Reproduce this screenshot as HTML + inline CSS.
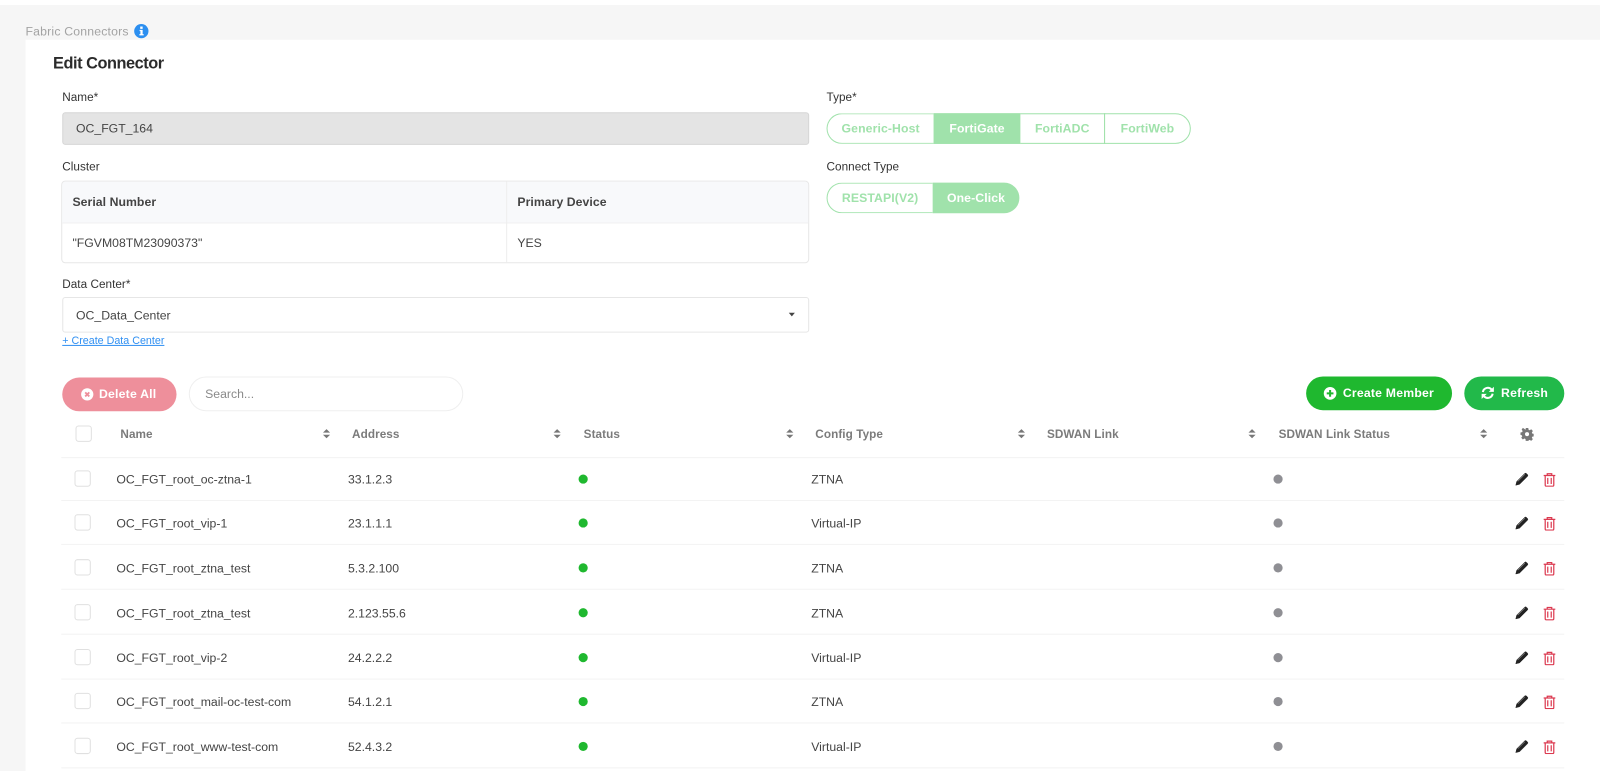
<!DOCTYPE html>
<html lang="en">
<head>
<meta charset="utf-8">
<title>Edit Connector</title>
<style>
html,body{margin:0;padding:0;width:1600px;height:771px;overflow:hidden;background:#fff;font-family:"Liberation Sans",sans-serif;color:#333}
#wrap{position:absolute;left:0;top:0;width:1568px;height:756px;transform:scale(1.020408);transform-origin:0 0;overflow:hidden}
#bg{position:absolute;left:0;top:5px;width:1568px;height:751px;background:#f6f6f6}
#card{position:absolute;left:25px;top:39px;width:1543px;height:717px;background:#fff}
.t{position:absolute;white-space:nowrap;line-height:16px;font-size:11.5px;letter-spacing:-.1px}
.b{position:absolute;box-sizing:border-box}
.lab{color:#333;font-size:11.5px;letter-spacing:.03px}
.th{color:#7b7b7b;font-weight:bold;font-size:11.5px;letter-spacing:.07px}
.cell{color:#444;font-size:12px;letter-spacing:0}
.chk{position:absolute;width:15.5px;height:15.5px;box-sizing:border-box;border:1px solid #e0e0e0;border-radius:3px;background:#fff}
.sep{position:absolute;left:60px;width:1473px;height:1px;background:#f3f3f3}
.dot{position:absolute;width:9px;height:9px;border-radius:50%}
.g{background:#1fb82f}.n{background:#8f8f94}
.seg{position:absolute;box-sizing:border-box;height:30px;line-height:28px;text-align:center;color:#a0e2ab;font-weight:bold;font-size:12px;letter-spacing:.1px;border:1px solid #a0e2ab;background:#fff}
.on{background:#a0e2ab;color:#fff}
.btn{position:absolute;box-sizing:border-box;height:33px;border-radius:17px;color:#fff;font-weight:bold;font-size:12px;line-height:33px;letter-spacing:.2px}
svg{position:absolute;display:block}
</style>
</head>
<body>
<div id="wrap">
<div id="bg"></div>
<div id="card"></div>

<div class="t" style="left:25px;top:23px;color:#a3a3a3;font-size:12px;letter-spacing:.18px">Fabric Connectors</div>
<svg style="left:130.500px;top:22.500px" width="15" height="15" viewBox="0 0 15 15"><circle cx="7.5" cy="7.5" r="7" fill="#2c8ff0"/><rect x="6.4" y="3" width="2.4" height="2.3" fill="#fff"/><path d="M5.8 6.3h3v4.2h1v1.2H5.6v-1.2h1V7.5h-.8z" fill="#fff"/></svg>

<div class="t" style="left:52px;top:55px;font-size:16px;font-weight:bold;color:#2b2b2b;letter-spacing:-.45px">Edit Connector</div>

<div class="t lab" style="left:61px;top:88px">Name*</div>
<div class="b" style="left:61px;top:110px;width:732px;height:32px;background:#e4e4e4;border:1px solid #d6d6d6;border-radius:3px"></div>
<div class="t cell" style="left:74.500px;top:118px">OC_FGT_164</div>

<div class="t lab" style="left:61px;top:156px">Cluster</div>
<div class="b" style="left:60px;top:177px;width:733px;height:81px;border:1px solid #e7e7e7;border-radius:4px;background:#fff"></div>
<div class="b" style="left:61px;top:178px;width:731px;height:41px;background:#f8f9fb;border-bottom:1.500px solid #f0f0f0;border-radius:3px 3px 0 0"></div>
<div class="b" style="left:496px;top:178px;width:1px;height:79px;background:#eeeeee"></div>
<div class="t" style="left:71px;top:190px;font-weight:bold;font-size:12px;color:#444;letter-spacing:.05px">Serial Number</div>
<div class="t" style="left:507px;top:190px;font-weight:bold;font-size:12px;color:#444;letter-spacing:.05px">Primary Device</div>
<div class="t cell" style="left:71px;top:230px">"FGVM08TM23090373"</div>
<div class="t cell" style="left:507px;top:230px">YES</div>

<div class="t lab" style="left:61px;top:271px">Data Center*</div>
<div class="b" style="left:61px;top:291px;width:732px;height:35px;border:1px solid #e6e6e6;border-radius:3px;background:#fff"></div>
<div class="t cell" style="left:74.500px;top:301px">OC_Data_Center</div>
<svg style="left:772px;top:305.500px" width="8" height="5" viewBox="0 0 8 5"><path d="M1 .5h6L4 4z" fill="#444"/></svg>
<div class="t" style="left:61px;top:326px;font-size:10.5px;color:#2f8ff2;text-decoration:underline;letter-spacing:0">+ Create Data Center</div>

<div class="t lab" style="left:810px;top:88px">Type*</div>
<div class="seg" style="left:810px;top:111px;width:105px;border-radius:15px 0 0 15px;border-right:0">Generic-Host</div>
<div class="seg on" style="left:915px;top:111px;width:85px">FortiGate</div>
<div class="seg" style="left:1000px;top:111px;width:83px;border-left:0">FortiADC</div>
<div class="seg" style="left:1082px;top:111px;width:85px;border-radius:0 15px 15px 0">FortiWeb</div>

<div class="t lab" style="left:810px;top:156px">Connect Type</div>
<div class="seg" style="left:810px;top:179px;width:104px;border-radius:15px 0 0 15px;border-right:0">RESTAPI(V2)</div>
<div class="seg on" style="left:914px;top:179px;width:85px;border-radius:0 15px 15px 0">One-Click</div>

<div class="btn" style="left:61px;top:370px;width:112px;background:#ee8f9b;padding-left:36px">Delete All</div>
<svg style="left:78.500px;top:379.500px" width="13" height="13" viewBox="0 0 13 13"><circle cx="6.5" cy="6.5" r="6" fill="#fff"/><path d="M4.500 4.500l4 4M8.500 4.500l-4 4" stroke="#ee8f9b" stroke-width="1.800"/></svg>
<div class="b" style="left:185px;top:369px;width:269px;height:34px;border:1px solid #efefef;border-radius:17px;background:#fff"></div>
<div class="t" style="left:201px;top:378px;color:#8a8a8a;font-size:12px;letter-spacing:0">Search...</div>

<div class="btn" style="left:1280px;top:369px;width:143px;background:#1fb82f;padding-left:36px">Create Member</div>
<svg style="left:1297px;top:379px" width="13" height="13" viewBox="0 0 13 13"><circle cx="6.500" cy="6.500" r="6.200" fill="#fff"/><path d="M6.500 3.200v6.600M3.200 6.500h6.600" stroke="#1fb82f" stroke-width="2"/></svg>
<div class="btn" style="left:1435px;top:369px;width:98px;background:#22b94a;padding-left:36px">Refresh</div>
<svg style="left:1451px;top:378px" width="14" height="14" viewBox="0 0 14 14"><path d="M2.200 6.200A4.900 4.900 0 0 1 10.600 3.600" fill="none" stroke="#fff" stroke-width="2"/><path d="M13 1v5H8z" fill="#fff"/><path d="M11.800 7.800A4.900 4.900 0 0 1 3.400 10.400" fill="none" stroke="#fff" stroke-width="2"/><path d="M1 13V8h5z" fill="#fff"/></svg>

<!-- header -->
<div class="chk" style="left:74px;top:417px"></div>
<div class="t th" style="left:118px;top:417.500px">Name</div>
<div class="t th" style="left:345px;top:417.500px">Address</div>
<div class="t th" style="left:572px;top:417.500px">Status</div>
<div class="t th" style="left:799px;top:417.500px">Config Type</div>
<div class="t th" style="left:1026px;top:417.500px">SDWAN Link</div>
<div class="t th" style="left:1253px;top:417.500px">SDWAN Link Status</div>
<svg style="left:315.500px;top:420px" width="8" height="10" viewBox="0 0 8 10"><path d="M4 .5L7.500 4H.5zM4 9.500L.5 6h7z" fill="#777"/></svg>
<svg style="left:541.500px;top:420px" width="8" height="10" viewBox="0 0 8 10"><path d="M4 .5L7.500 4H.5zM4 9.500L.5 6h7z" fill="#777"/></svg>
<svg style="left:769.500px;top:420px" width="8" height="10" viewBox="0 0 8 10"><path d="M4 .5L7.500 4H.5zM4 9.500L.5 6h7z" fill="#777"/></svg>
<svg style="left:996.500px;top:420px" width="8" height="10" viewBox="0 0 8 10"><path d="M4 .5L7.500 4H.5zM4 9.500L.5 6h7z" fill="#777"/></svg>
<svg style="left:1222.500px;top:420px" width="8" height="10" viewBox="0 0 8 10"><path d="M4 .5L7.500 4H.5zM4 9.500L.5 6h7z" fill="#777"/></svg>
<svg style="left:1449.500px;top:420px" width="8" height="10" viewBox="0 0 8 10"><path d="M4 .5L7.500 4H.5zM4 9.500L.5 6h7z" fill="#777"/></svg>
<svg style="left:1490px;top:418.500px" width="13" height="13" viewBox="0 0 13 13"><path fill-rule="evenodd" d="M5.300.5h2.400l.3 1.700 1.100.5 1.500-1 1.600 1.700-1 1.400.5 1.100 1.700.3v2.400l-1.700.3-.5 1.100 1 1.400-1.600 1.700-1.500-1-1.100.5-.3 1.700H5.300L5 11.200l-1.100-.5-1.500 1L.8 10l1-1.400-.5-1.100-1.300-.3V4.800l1.700-.3.500-1.100-1-1.400L2.400.3l1.500 1L5 2.200zM6.500 4.500a2 2 0 1 0 0 4 2 2 0 0 0 0-4z" fill="#777"/></svg>
<div class="sep" style="top:448px"></div>

<!-- row 1 -->
<div class="chk" style="left:73px;top:461px"></div>
<div class="t cell" style="left:114px;top:461.500px">OC_FGT_root_oc-ztna-1</div>
<div class="t cell" style="left:341px;top:461.500px">33.1.2.3</div>
<div class="dot g" style="left:567px;top:465px"></div>
<div class="t cell" style="left:795px;top:461.500px">ZTNA</div>
<div class="dot n" style="left:1248px;top:465px"></div>
<svg style="left:1485px;top:462.500px" width="13" height="13" viewBox="0 0 14 14"><path d="M.5 13.500l1-4L9.800 1.200c.6-.6 1.400-.6 2 0l1 1c.6.600.6 1.400 0 2L4.500 12.500zM2.700 9.300l2 2" fill="#222" stroke="#222" stroke-width=".5"/><path d="M2.600 9.400l7.500-7.500" stroke="#888" stroke-width=".7"/></svg>
<svg style="left:1512px;top:462.500px" width="13" height="14" viewBox="0 0 13 14"><path d="M.8 3h11.400M4.300 3V1.300h4.400V3M2.300 3v9.300c0 .7.400 1.200 1 1.200h6.400c.6 0 1-.5 1-1.200V3M4.800 5.300v6M8.200 5.300v6" fill="none" stroke="#dc3a50" stroke-width="1.200"/></svg>
<div class="sep" style="top:490px"></div>

<!-- row 2 -->
<div class="chk" style="left:73px;top:504px"></div>
<div class="t cell" style="left:114px;top:504.500px">OC_FGT_root_vip-1</div>
<div class="t cell" style="left:341px;top:504.500px">23.1.1.1</div>
<div class="dot g" style="left:567px;top:508px"></div>
<div class="t cell" style="left:795px;top:504.500px">Virtual-IP</div>
<div class="dot n" style="left:1248px;top:508px"></div>
<svg style="left:1485px;top:505.500px" width="13" height="13" viewBox="0 0 14 14"><path d="M.5 13.500l1-4L9.800 1.200c.6-.6 1.400-.6 2 0l1 1c.6.600.6 1.400 0 2L4.500 12.500zM2.700 9.300l2 2" fill="#222" stroke="#222" stroke-width=".5"/><path d="M2.600 9.400l7.500-7.500" stroke="#888" stroke-width=".7"/></svg>
<svg style="left:1512px;top:505.500px" width="13" height="14" viewBox="0 0 13 14"><path d="M.8 3h11.400M4.300 3V1.300h4.400V3M2.300 3v9.300c0 .7.400 1.200 1 1.200h6.400c.6 0 1-.5 1-1.200V3M4.800 5.300v6M8.200 5.300v6" fill="none" stroke="#dc3a50" stroke-width="1.200"/></svg>
<div class="sep" style="top:533px"></div>

<!-- row 3 -->
<div class="chk" style="left:73px;top:548px"></div>
<div class="t cell" style="left:114px;top:548.500px">OC_FGT_root_ztna_test</div>
<div class="t cell" style="left:341px;top:548.500px">5.3.2.100</div>
<div class="dot g" style="left:567px;top:552px"></div>
<div class="t cell" style="left:795px;top:548.500px">ZTNA</div>
<div class="dot n" style="left:1248px;top:552px"></div>
<svg style="left:1485px;top:549.500px" width="13" height="13" viewBox="0 0 14 14"><path d="M.5 13.500l1-4L9.800 1.200c.6-.6 1.400-.6 2 0l1 1c.6.600.6 1.400 0 2L4.500 12.500zM2.700 9.300l2 2" fill="#222" stroke="#222" stroke-width=".5"/><path d="M2.600 9.400l7.500-7.500" stroke="#888" stroke-width=".7"/></svg>
<svg style="left:1512px;top:549.500px" width="13" height="14" viewBox="0 0 13 14"><path d="M.8 3h11.400M4.300 3V1.300h4.400V3M2.300 3v9.300c0 .7.400 1.200 1 1.200h6.400c.6 0 1-.5 1-1.200V3M4.800 5.300v6M8.200 5.300v6" fill="none" stroke="#dc3a50" stroke-width="1.200"/></svg>
<div class="sep" style="top:577px"></div>

<!-- row 4 -->
<div class="chk" style="left:73px;top:592px"></div>
<div class="t cell" style="left:114px;top:592.500px">OC_FGT_root_ztna_test</div>
<div class="t cell" style="left:341px;top:592.500px">2.123.55.6</div>
<div class="dot g" style="left:567px;top:596px"></div>
<div class="t cell" style="left:795px;top:592.500px">ZTNA</div>
<div class="dot n" style="left:1248px;top:596px"></div>
<svg style="left:1485px;top:593.500px" width="13" height="13" viewBox="0 0 14 14"><path d="M.5 13.500l1-4L9.800 1.200c.6-.6 1.400-.6 2 0l1 1c.6.600.6 1.400 0 2L4.500 12.500zM2.700 9.300l2 2" fill="#222" stroke="#222" stroke-width=".5"/><path d="M2.600 9.400l7.500-7.500" stroke="#888" stroke-width=".7"/></svg>
<svg style="left:1512px;top:593.500px" width="13" height="14" viewBox="0 0 13 14"><path d="M.8 3h11.400M4.300 3V1.300h4.400V3M2.300 3v9.300c0 .7.400 1.200 1 1.200h6.400c.6 0 1-.5 1-1.200V3M4.800 5.300v6M8.200 5.300v6" fill="none" stroke="#dc3a50" stroke-width="1.200"/></svg>
<div class="sep" style="top:621px"></div>

<!-- row 5 -->
<div class="chk" style="left:73px;top:636px"></div>
<div class="t cell" style="left:114px;top:636.500px">OC_FGT_root_vip-2</div>
<div class="t cell" style="left:341px;top:636.500px">24.2.2.2</div>
<div class="dot g" style="left:567px;top:640px"></div>
<div class="t cell" style="left:795px;top:636.500px">Virtual-IP</div>
<div class="dot n" style="left:1248px;top:640px"></div>
<svg style="left:1485px;top:637.500px" width="13" height="13" viewBox="0 0 14 14"><path d="M.5 13.500l1-4L9.800 1.200c.6-.6 1.400-.6 2 0l1 1c.6.600.6 1.400 0 2L4.500 12.500zM2.700 9.300l2 2" fill="#222" stroke="#222" stroke-width=".5"/><path d="M2.600 9.400l7.500-7.500" stroke="#888" stroke-width=".7"/></svg>
<svg style="left:1512px;top:637.500px" width="13" height="14" viewBox="0 0 13 14"><path d="M.8 3h11.400M4.300 3V1.300h4.400V3M2.300 3v9.300c0 .7.400 1.200 1 1.200h6.400c.6 0 1-.5 1-1.200V3M4.800 5.300v6M8.200 5.300v6" fill="none" stroke="#dc3a50" stroke-width="1.200"/></svg>
<div class="sep" style="top:665px"></div>

<!-- row 6 -->
<div class="chk" style="left:73px;top:679px"></div>
<div class="t cell" style="left:114px;top:679.500px">OC_FGT_root_mail-oc-test-com</div>
<div class="t cell" style="left:341px;top:679.500px">54.1.2.1</div>
<div class="dot g" style="left:567px;top:683px"></div>
<div class="t cell" style="left:795px;top:679.500px">ZTNA</div>
<div class="dot n" style="left:1248px;top:683px"></div>
<svg style="left:1485px;top:680.500px" width="13" height="13" viewBox="0 0 14 14"><path d="M.5 13.500l1-4L9.800 1.200c.6-.6 1.400-.6 2 0l1 1c.6.600.6 1.400 0 2L4.500 12.500zM2.700 9.300l2 2" fill="#222" stroke="#222" stroke-width=".5"/><path d="M2.600 9.400l7.500-7.500" stroke="#888" stroke-width=".7"/></svg>
<svg style="left:1512px;top:680.500px" width="13" height="14" viewBox="0 0 13 14"><path d="M.8 3h11.400M4.300 3V1.300h4.400V3M2.300 3v9.300c0 .7.400 1.200 1 1.200h6.400c.6 0 1-.5 1-1.200V3M4.800 5.300v6M8.200 5.300v6" fill="none" stroke="#dc3a50" stroke-width="1.200"/></svg>
<div class="sep" style="top:708px"></div>

<!-- row 7 -->
<div class="chk" style="left:73px;top:723px"></div>
<div class="t cell" style="left:114px;top:723.500px">OC_FGT_root_www-test-com</div>
<div class="t cell" style="left:341px;top:723.500px">52.4.3.2</div>
<div class="dot g" style="left:567px;top:727px"></div>
<div class="t cell" style="left:795px;top:723.500px">Virtual-IP</div>
<div class="dot n" style="left:1248px;top:727px"></div>
<svg style="left:1485px;top:724.500px" width="13" height="13" viewBox="0 0 14 14"><path d="M.5 13.500l1-4L9.800 1.200c.6-.6 1.400-.6 2 0l1 1c.6.600.6 1.400 0 2L4.500 12.500zM2.700 9.300l2 2" fill="#222" stroke="#222" stroke-width=".5"/><path d="M2.600 9.400l7.500-7.500" stroke="#888" stroke-width=".7"/></svg>
<svg style="left:1512px;top:724.500px" width="13" height="14" viewBox="0 0 13 14"><path d="M.8 3h11.400M4.300 3V1.300h4.400V3M2.300 3v9.300c0 .7.400 1.200 1 1.200h6.400c.6 0 1-.5 1-1.200V3M4.800 5.300v6M8.200 5.300v6" fill="none" stroke="#dc3a50" stroke-width="1.200"/></svg>
<div class="sep" style="top:752px"></div>
</div>
</body>
</html>
